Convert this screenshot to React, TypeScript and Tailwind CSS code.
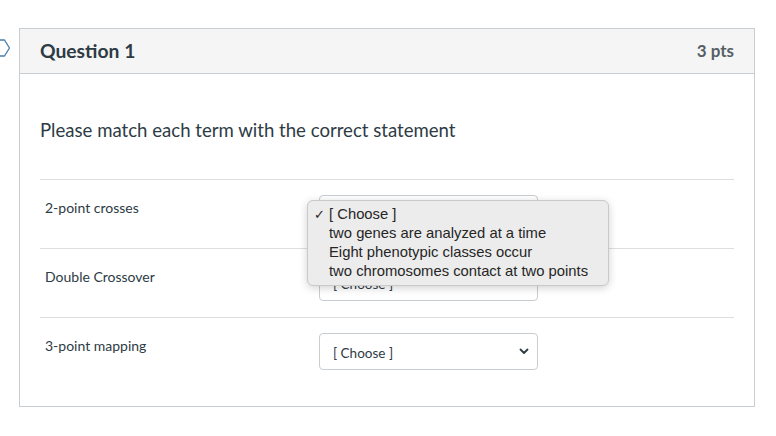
import React from 'react';

const rows = ['2-point crosses', 'Double Crossover', '3-point mapping'];
const options = [
  '[ Choose ]',
  'two genes are analyzed at a time',
  'Eight phenotypic classes occur',
  'two chromosomes contact at two points',
];

function Chevron() {
  return (
    <svg width="10" height="7" viewBox="0 0 10 7" className="text-[#2d3b45]">
      <path d="M1.5 1.5 L5 5 L8.5 1.5" fill="none" stroke="currentColor" strokeWidth="1.8" strokeLinecap="round" strokeLinejoin="round" />
    </svg>
  );
}

function FakeSelect() {
  return (
    <div className="flex h-[37px] w-[219px] items-center justify-between rounded-[4px] border border-[#c7cdd1] bg-white pl-[13px] pr-[8px] text-[13.5px] text-[#2d3b45]">
      <span className="pt-[3px]">[ Choose ]</span>
      <Chevron />
    </div>
  );
}

function Popup() {
  return (
    <div
      className="absolute left-[-12px] top-[5px] z-10 w-[302px] rounded-[6px] border border-[#c9c9c9] bg-[#ececec] py-[4px] text-[14.8px] leading-[19px] text-[#262626] shadow-[0_2px_8px_rgba(0,0,0,0.18)]"
      style={{ fontFamily: '"Liberation Sans", Arial, sans-serif' }}
    >
      {options.map((o, i) => (
        <div key={o} className="flex items-center">
          <span className="w-[21px] pl-[6px] text-[13px]">{i === 0 ? '✓' : ''}</span>
          <span>{o}</span>
        </div>
      ))}
    </div>
  );
}

export default function App() {
  return (
    <div className="relative h-[436px] w-[776px] bg-white" style={{ fontFamily: 'Lato, "Open Sans", sans-serif' }}>
      {/* flag marker */}
      <svg className="absolute left-0 top-[39px]" width="12" height="18" viewBox="0 0 12 18">
        <path d="M-4 1 H4.5 L9.5 9 L4.5 17 H-4" fill="none" stroke="#4b7ea8" strokeWidth="1.4" strokeLinejoin="round" />
      </svg>

      <div className="pt-[28px] pl-[19px]">
        <div className="w-[736px] border border-[#c7cdd1]">
          {/* header */}
          <div className="flex h-[45px] items-center justify-between border-b border-[#c7cdd1] bg-[#f5f5f5] px-[20px]">
            <h2 className="text-[19.3px] font-bold text-[#2d3b45]">Question 1</h2>
            <span className="text-[17px] font-bold text-[#555f66]">3 pts</span>
          </div>

          {/* body */}
          <div className="px-[20px] pb-[20px]">
            <p className="pt-[44px] pb-[36px] text-[18.6px] leading-[25px] text-[#2d3b45]">
              Please match each term with the correct statement
            </p>
            {rows.map((label, i) => (
              <div key={label} className="flex border-t border-[#dcdee0] pt-[15px] pb-[16px]">
                <div className="w-[279px] pl-[5px] pt-[3px] text-[14px] leading-[20px] text-[#2d3b45]">{label}</div>
                <div className="relative">
                  <FakeSelect />
                  {i === 0 && <Popup />}
                </div>
              </div>
            ))}
          </div>
        </div>
      </div>
    </div>
  );
}
